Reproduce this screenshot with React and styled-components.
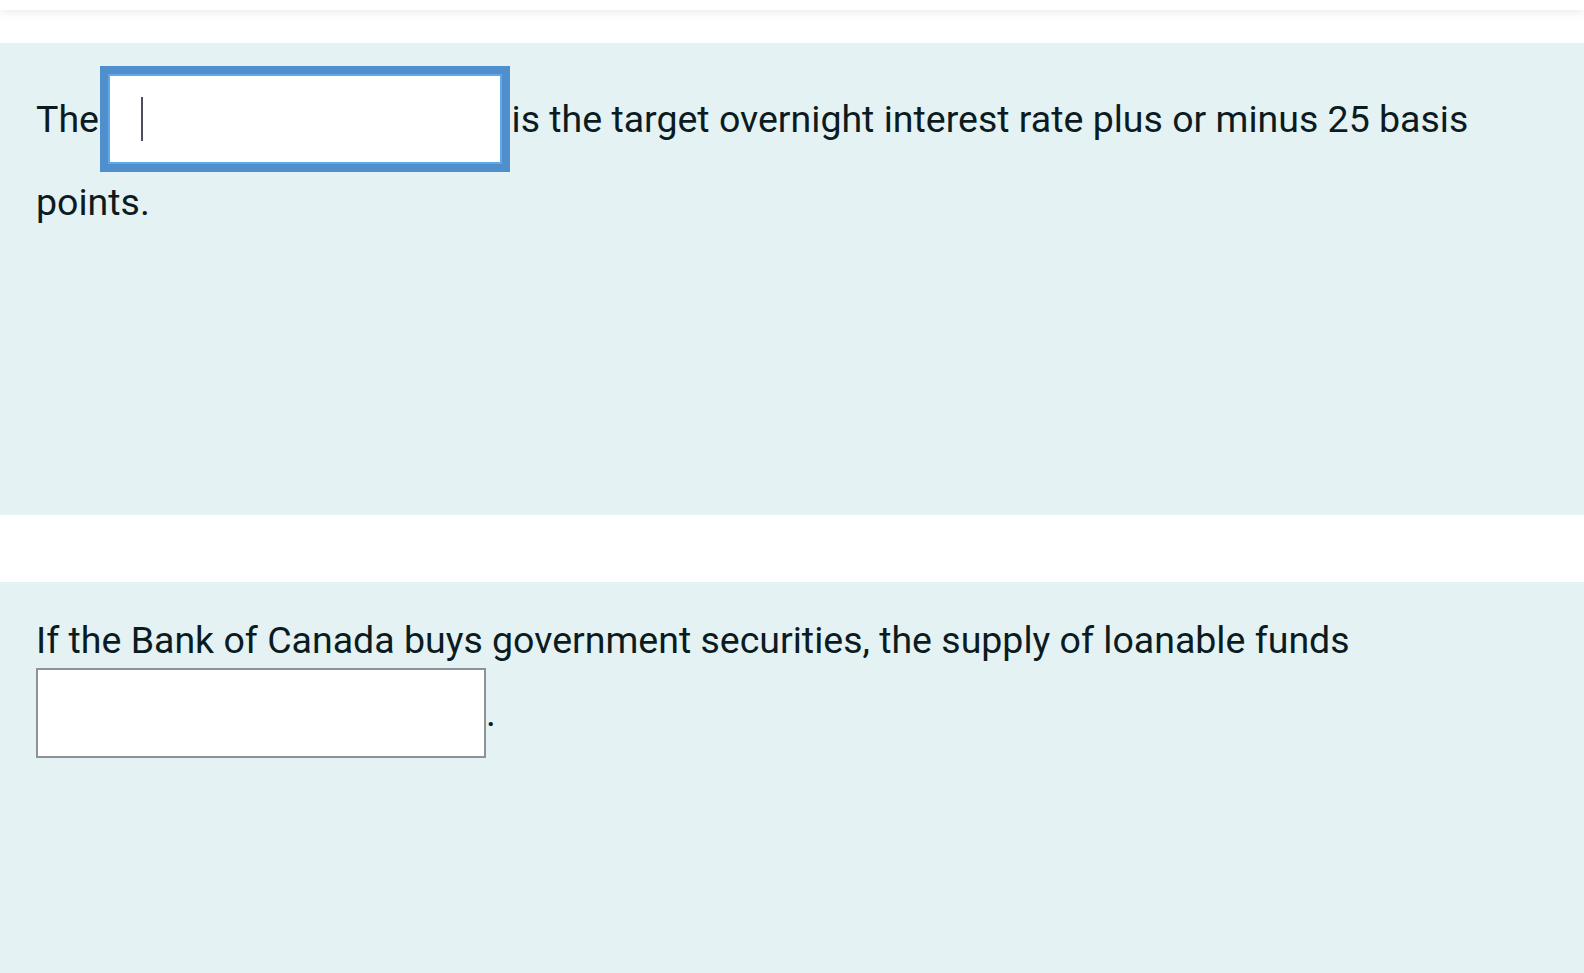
import React from 'react'
import styled, { createGlobalStyle } from 'styled-components'

const GlobalStyle = createGlobalStyle`
    html, body {
        margin: 0;
        padding: 0;
        background: #FFFFFF;
    }
    body {
        font-family: Roboto, "Liberation Sans", sans-serif;
        color: #0c1b1f;
    }
`

const Page = styled.div`
    width: 1584px;
    height: 973px;
    display: flex;
    flex-direction: column;
    overflow: hidden;
    background: #FFFFFF;
`

const TopBar = styled.div`
    flex: none;
    height: 10px;
    background: #FFFFFF;
    box-shadow: 0 2px 10px rgba(0, 0, 0, 0.09);
    position: relative;
    z-index: 1;
`

const Questions = styled.div`
    flex: 1;
    display: flex;
    flex-direction: column;
    gap: 67px;
    padding-top: 33px;
`

const Panel = styled.section`
    flex: ${props => props.$grow ? '1' : 'none'};
    height: ${props => props.$grow ? 'auto' : `${props.$height}px`};
    box-sizing: border-box;
    padding: 31px 36px 0 36px;
    background: #e4f2f3;
`

const Text = styled.p`
    margin: 0;
    font-size: 37.5px;
    line-height: 55px;
    font-weight: 400;
    letter-spacing: 0;
`

const Field = styled.span`
    display: inline-block;
    box-sizing: border-box;
    width: ${props => props.$width}px;
    height: 90px;
    margin: 0 0 11px 0;
    padding-left: 31px;
    line-height: 86px;
    background: #FFFFFF;
    border: 2px solid ${props => props.$focused ? '#5fa9ea' : '#8b9299'};
    box-shadow: ${props => props.$focused ? '0 0 0 8px #4f8fce' : 'none'};
`

const Caret = styled.span`
    display: inline-block;
    width: 2px;
    height: 44px;
    vertical-align: -9px;
    background: #4a4f5a;
`

const App = () => {
    return (
        <>
            <GlobalStyle />
            <Page>
                <TopBar />
                <Questions>
                    <Panel $height={472}>
                        <Text>
                            The <Field $focused $width={394} role="textbox"><Caret /></Field> is the target overnight interest rate plus or minus 25 basis points.
                        </Text>
                    </Panel>
                    <Panel $grow>
                        <Text>
                            If the Bank of Canada buys government securities, the supply of loanable funds <Field $width={450} role="textbox">{'\u00A0'}</Field>.
                        </Text>
                    </Panel>
                </Questions>
            </Page>
        </>
    )
}

export default App
